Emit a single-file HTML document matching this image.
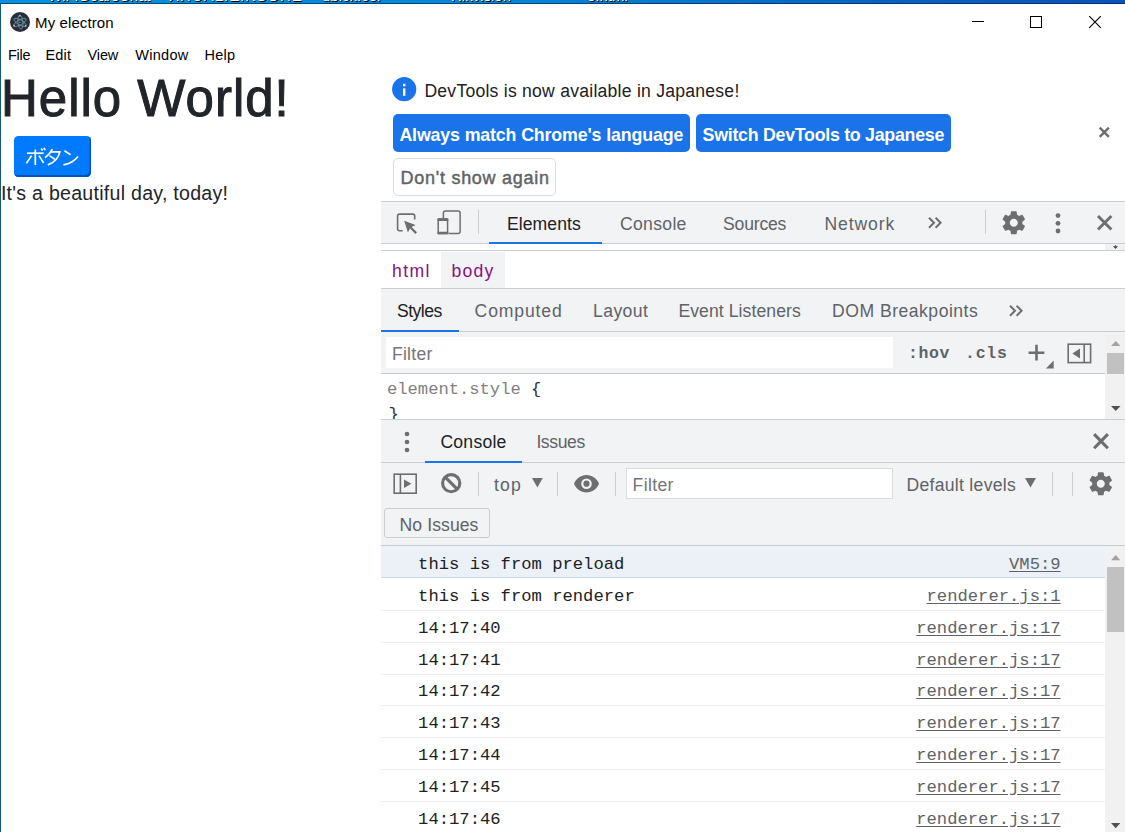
<!DOCTYPE html>
<html><head><meta charset="utf-8"><title>My electron</title>
<style>
html,body{margin:0;padding:0}
html{width:1125px;height:832px;overflow:hidden}
body{width:1125px;height:832px;position:relative;overflow:hidden;background:#fff;font-family:"Liberation Sans",sans-serif}
.a{position:absolute}
.t{position:absolute;white-space:nowrap;line-height:1}
.s{font-family:"Liberation Sans",sans-serif}
.m{font-family:"Liberation Mono",monospace}
.hl{position:absolute;height:1px;background:#cacdd1}
.bar{position:absolute;background:#f1f3f4}
.sep{position:absolute;width:1px;background:#cacdd1}
.row{position:absolute;left:381px;width:724px;height:32px;box-sizing:border-box;border-bottom:1px solid #f0f0f0}
.msg{position:absolute;left:418.1px;top:0;font-family:"Liberation Mono",monospace;font-size:17.19px;line-height:32px;color:#202124;white-space:nowrap}
.lnk{position:absolute;right:64.4px;top:0;font-family:"Liberation Mono",monospace;font-size:17.19px;line-height:32px;color:#5f6368;white-space:nowrap;text-decoration:underline;text-underline-offset:2px}
svg{position:absolute;overflow:visible}
</style></head><body>

<!-- desktop strip + window border -->
<div class="a" style="left:0;top:0;width:1125px;height:4px;background:linear-gradient(to right,#0091e0 0%,#0088d8 45%,#0560c0 80%,#0552b8 100%);overflow:hidden">
  <div class="t s" style="left:48px;top:-12.5px;font-size:15px;color:#fff;text-shadow:1px 1px 0 #000">WiFiGearsChat</div>
  <div class="t s" style="left:169px;top:-12.5px;font-size:15px;color:#fff;text-shadow:1px 1px 0 #000;letter-spacing:1px">XHUALIEIKSOHE</div>
  <div class="t s" style="left:322px;top:-12.5px;font-size:15px;color:#fff;text-shadow:1px 1px 0 #000">ublck.cer</div>
  <div class="t s" style="left:451px;top:-12.5px;font-size:15px;color:#fff;text-shadow:1px 1px 0 #000">Hikvision</div>
  <div class="t s" style="left:587px;top:-12.5px;font-size:15px;color:#fff;text-shadow:1px 1px 0 #000">3.html</div>
</div>
<div class="a" style="left:0;top:3px;width:1125px;height:1px;background:linear-gradient(to right,#0a4a6e,#0a2f6b)"></div>
<div class="a" style="left:0;top:3px;width:1px;height:829px;background:#14587c"></div>

<!-- title bar -->
<svg style="left:10px;top:12px" width="20" height="20" viewBox="0 0 20 20">
  <circle cx="10" cy="10" r="10" fill="#2b2e3a"/>
  <g fill="none" stroke="#9feaf9" stroke-width="0.75" opacity="0.62">
    <ellipse cx="10" cy="10.4" rx="6.9" ry="2.5" transform="rotate(-30 10 10.4)"/>
    <ellipse cx="10" cy="10.4" rx="6.9" ry="2.500" transform="rotate(30 10 10.400)"/>
    <ellipse cx="10.400" cy="10.200" rx="2.500" ry="6.900" transform="rotate(-6 10.400 10.200)"/>
  </g>
  <g fill="#9feaf9" opacity="0.7"><circle cx="9.800" cy="3.800" r="0.950"/><circle cx="4" cy="13.800" r="0.950"/><circle cx="15.700" cy="13.900" r="0.950"/><rect x="9" y="9.900" width="1.500" height="0.800"/></g>
</svg>
<!-- window controls -->
<div class="a" style="left:972px;top:21px;width:12px;height:1px;background:#000"></div>
<div class="a" style="left:1030px;top:16px;width:12px;height:12px;box-sizing:border-box;border:1px solid #000"></div>
<svg style="left:1089px;top:16px" width="12" height="12" viewBox="0 0 12 12"><path d="M0.2 0.2L11.8 11.8M11.8 0.2L0.2 11.8" stroke="#000" stroke-width="1.1" fill="none"/></svg>

<!-- page button -->
<div class="a" style="left:14px;top:136px;width:77px;height:41px;box-sizing:border-box;background:#007bff;border-radius:4.5px;box-shadow:inset -1.5px -2px 0 #0054b4"></div>
<svg style="left:24px;top:146px" width="58" height="22" viewBox="24 146 58 22" fill="none" stroke="#fff" stroke-width="1.7" stroke-linecap="butt">
  <!-- ボ -->
  <path d="M27 153.2H43.6"/><path d="M35.3 149.6V165"/><path d="M31.6 155.6L26.4 163.4"/><path d="M39 155.6L43.6 163"/>
  <path d="M41.2 148.6L42.6 150.6M43.8 148L45.2 150"/>
  <!-- タ -->
  <path d="M52.4 149.2Q50 154 45 157.8"/><path d="M50.4 151.8H59.8Q58 161 47.8 164.9"/><path d="M49.4 155.6L55 159.4"/>
  <!-- ン -->
  <path d="M64.4 150.8L70.6 154.8"/><path d="M78 156.4Q73 163 63.4 164.8"/>
</svg>

<!-- ============ DEVTOOLS ============ -->
<!-- infobar -->
<svg style="left:391.8px;top:77.2px" width="24.4" height="24.4" viewBox="0 0 24.4 24.4"><circle cx="12.2" cy="12.2" r="12.1" fill="#1a73e8"/><rect x="11" y="11.4" width="2.4" height="7.4" fill="#fff"/><rect x="11" y="6.800" width="2.400" height="2.500" fill="#fff"/></svg>
<div class="a" style="left:393px;top:114px;width:297px;height:38px;background:#1a73e8;border-radius:5px"></div>
<div class="a" style="left:696px;top:114px;width:255px;height:38px;background:#1a73e8;border-radius:5px"></div>
<div class="a" style="left:393px;top:158px;width:163px;height:38px;box-sizing:border-box;border:1px solid #dadce0;border-radius:5px;background:#fff"></div>
<svg style="left:1098.6px;top:127px" width="10.6" height="10.6" viewBox="0 0 10.6 10.6"><path d="M0.7 0.7L9.9 9.9M9.9 0.7L0.7 9.9" stroke="#6e6e6e" stroke-width="2.400" fill="none"/></svg>

<!-- main toolbar -->
<div class="bar" style="left:381px;top:201px;width:744px;height:43px"></div>
<div class="hl" style="left:381px;top:201px;width:744px"></div>
<div class="hl" style="left:381px;top:243px;width:744px"></div>
<div class="a" style="left:489px;top:241.5px;width:113px;height:2px;background:#1a73e8"></div>
<!-- inspect icon -->
<svg style="left:396px;top:213px" width="22" height="21" viewBox="0 0 22 21" fill="none" stroke="#6e6e6e" stroke-width="1.6">
  <path d="M6.7 17.8H3.6Q1.6 17.8 1.6 15.8V3.1Q1.6 1.1 3.6 1.1H16.7Q18.7 1.1 18.7 3.1V6.4"/>
  <path d="M8.2 7.8L19.6 11.9L15.6 13.9L21 19.3L19.4 20.9L14 15.500L11.900 19.500Z" fill="#6e6e6e" stroke="none"/>
</svg>
<!-- device icon -->
<svg style="left:437px;top:210px" width="25" height="25" viewBox="0 0 25 25" fill="none" stroke="#6e6e6e" stroke-width="1.5">
  <path d="M6.4 8.4V3Q6.4 1 8.4 1H21.1Q23.1 1 23.1 3V21.6Q23.100 23.600 21.100 23.600H11.600"/>
  <rect x="1.2" y="9" width="9.4" height="14.6" rx="0.8"/>
  <path d="M0.5 9.6H11.300M0.500 23H11.300" stroke-width="2.600"/>
</svg>
<div class="sep" style="left:478px;top:210px;height:24px"></div>
<!-- » -->
<svg style="left:928px;top:217px" width="14" height="12" viewBox="0 0 14 12" fill="none" stroke="#6e6e6e" stroke-width="2"><path d="M1 0.800L6 5.800L1 10.800M7.600 0.800L12.600 5.800L7.600 10.800"/></svg>
<div class="sep" style="left:985px;top:210px;height:24px"></div>
<!-- gear -->
<svg style="left:1000.2px;top:208.5px" width="27.6" height="27.6" viewBox="0 0 24 24"><path fill="#6e6e6e" d="M19.43 12.98c.04-.32.07-.64.07-.98s-.03-.66-.07-.98l2.11-1.65c.19-.15.24-.42.12-.64l-2-3.46c-.12-.22-.39-.3-.61-.22l-2.49 1c-.52-.4-1.08-.73-1.69-.98l-.38-2.65C14.46 2.18 14.25 2 14 2h-4c-.25 0-.46.18-.49.42l-.38 2.65c-.61.25-1.17.59-1.69.98l-2.49-1c-.23-.09-.49 0-.61.22l-2 3.46c-.13.22-.07.49.12.64l2.11 1.65c-.04.32-.07.65-.07.98s.03.66.07.98l-2.11 1.65c-.19.15-.24.42-.12.64l2 3.46c.12.22.39.3.61.22l2.49-1c.52.4 1.08.73 1.69.98l.38 2.65c.03.24.24.42.49.42h4c.25 0 .46-.18.49-.42l.38-2.65c.61-.25 1.17-.59 1.69-.98l2.49 1c.23.09.49 0 .61-.22l2-3.46c.12-.22.07-.49-.12-.64l-2.11-1.65zM12 15.5c-1.93 0-3.500-1.570-3.500-3.500s1.570-3.500 3.500-3.500 3.500 1.570 3.500 3.500-1.570 3.500-3.500 3.500z"/></svg>
<!-- kebab -->
<svg style="left:1054px;top:212px" width="8" height="22" viewBox="0 0 8 22" fill="#6e6e6e"><circle cx="4" cy="3.6" r="2.4"/><circle cx="4" cy="11.3" r="2.4"/><circle cx="4" cy="19" r="2.4"/></svg>
<!-- X -->
<svg style="left:1096.8px;top:214.6px" width="15.4" height="15.6" viewBox="0 0 15.4 15.6"><path d="M1 1L14.4 14.6M14.4 1L1 14.6" stroke="#6e6e6e" stroke-width="2.9" fill="none"/></svg>

<!-- small scrollbar stub under toolbar -->
<div class="a" style="left:1105px;top:244px;width:20px;height:6px;background:#f1f1f1"></div>
<svg style="left:1112.5px;top:245px" width="5" height="4" viewBox="0 0 5 4"><path d="M2.5 0V2M0.6 1.6L2.5 3.6L4.4 1.6Z" stroke="#505050" stroke-width="0.8" fill="#505050"/></svg>
<div class="hl" style="left:381px;top:250px;width:744px"></div>

<!-- breadcrumbs -->
<div class="a" style="left:441px;top:252px;width:64px;height:36px;background:#f1f3f4"></div>
<div class="hl" style="left:381px;top:288px;width:744px"></div>

<!-- styles tab bar -->
<div class="bar" style="left:381px;top:289px;width:744px;height:42px"></div>
<div class="hl" style="left:381px;top:331px;width:744px"></div>
<div class="a" style="left:381px;top:329.5px;width:78px;height:2px;background:#1a73e8"></div>
<svg style="left:1009px;top:305px" width="14" height="12" viewBox="0 0 14 12" fill="none" stroke="#6e6e6e" stroke-width="2"><path d="M1 0.800L6 5.800L1 10.800M7.600 0.800L12.600 5.800L7.600 10.800"/></svg>

<!-- filter row -->
<div class="bar" style="left:381px;top:332px;width:724px;height:41px"></div>
<div class="a" style="left:386px;top:337px;width:507px;height:31px;background:#fff"></div>
<div class="hl" style="left:381px;top:373px;width:724px"></div>
<!-- plus -->
<svg style="left:1028px;top:344px" width="27" height="25" viewBox="0 0 27 25"><path d="M8.500 0.800V16.600M0.600 8.700H16.400" stroke="#6e6e6e" stroke-width="2.600" fill="none"/><path d="M25.700 16.600V24.400H17.900Z" fill="#6e6e6e"/></svg>
<!-- toggle sidebar -->
<svg style="left:1067px;top:343px" width="25" height="21" viewBox="0 0 25 21" fill="none" stroke="#6e6e6e" stroke-width="1.6"><rect x="1.2" y="1.2" width="22.4" height="18.4"/><path d="M17.2 1.2V19.6"/><path d="M13 5.400L5.400 10.400L13 15.400Z" fill="#6e6e6e" stroke="none"/></svg>

<!-- styles scrollbar -->
<div class="a" style="left:1105px;top:332px;width:20px;height:87px;background:#f1f1f1"></div>
<svg style="left:1110.5px;top:340.8px" width="9.5" height="5" viewBox="0 0 9.5 5"><path d="M4.75 0L9.5 5H0Z" fill="#a3a3a3"/></svg>
<div class="a" style="left:1107px;top:353px;width:17px;height:20.6px;background:#c1c1c1"></div>
<svg style="left:1110.5px;top:406px" width="9.5" height="5" viewBox="0 0 9.5 5"><path d="M0 0H9.5L4.75 5Z" fill="#505050"/></svg>

<!-- element.style -->
<div class="t m" style="left:387px;top:381.4px;font-size:17.15px;color:#808080">element.style <span style="color:#303134">{</span></div>
<div class="a" style="left:381px;top:400px;width:724px;height:19px;overflow:hidden"><div class="t m" style="left:7.5px;top:6.4px;font-size:17.15px;color:#303134">}</div></div>

<!-- drawer -->
<div class="bar" style="left:381px;top:419px;width:744px;height:127px"></div>
<div class="hl" style="left:381px;top:419px;width:744px"></div>
<div class="hl" style="left:381px;top:462px;width:744px"></div>
<div class="a" style="left:425px;top:460.5px;width:97px;height:2px;background:#1a73e8"></div>
<svg style="left:402.6px;top:431px" width="8" height="22" viewBox="0 0 8 22" fill="#6e6e6e"><circle cx="4" cy="3" r="2.3"/><circle cx="4" cy="11" r="2.3"/><circle cx="4" cy="19" r="2.3"/></svg>
<svg style="left:1093px;top:432.8px" width="16" height="16.4" viewBox="0 0 16 16.4"><path d="M1.1 1.1L14.9 15.3M14.9 1.1L1.1 15.3" stroke="#6e6e6e" stroke-width="3.1" fill="none"/></svg>

<!-- console toolbar icons -->
<svg style="left:393px;top:473px" width="24" height="21" viewBox="0 0 24 21" fill="none" stroke="#6e6e6e" stroke-width="1.6"><rect x="1.2" y="1.2" width="22" height="19"/><path d="M7.4 1.2V20.2"/><path d="M11 6.4L18.4 10.7L11 15Z" fill="#6e6e6e" stroke="none"/></svg>
<svg style="left:440.6px;top:473.4px" width="20.4" height="20.4" viewBox="0 0 20.4 20.4" fill="none" stroke="#6e6e6e" stroke-width="3.1"><circle cx="10.2" cy="10.2" r="8.600"/><path d="M4.2 4.2L16.2 16.2"/></svg>
<div class="sep" style="left:478px;top:471.6px;height:24px"></div>
<svg style="left:531.6px;top:478.2px" width="10.8" height="9.6" viewBox="0 0 10.8 9.6"><path d="M0 0H10.800L5.400 9.600Z" fill="#6e6e6e"/></svg>
<div class="sep" style="left:557px;top:471.6px;height:24px"></div>
<svg style="left:573.6px;top:474.6px" width="25" height="17.4" viewBox="0 0 25 17.4"><path d="M12.5 0C6.8 0 2 3.6 0 8.7c2 5.100 6.800 8.700 12.500 8.700s10.500-3.600 12.500-8.700C23 3.600 18.200 0 12.500 0z" fill="#6e6e6e"/><circle cx="12.500" cy="8.700" r="5.300" fill="#f1f3f4"/><circle cx="12.500" cy="8.700" r="3.100" fill="#6e6e6e"/></svg>
<div class="sep" style="left:615px;top:471.6px;height:24px"></div>
<div class="a" style="left:626px;top:467.6px;width:267px;height:31px;box-sizing:border-box;border:1px solid #dcdcdc;background:#fff"></div>
<svg style="left:1025px;top:478.4px" width="11" height="9.6" viewBox="0 0 11 9.600"><path d="M0 0H11L5.5 9.6Z" fill="#6e6e6e"/></svg>
<div class="sep" style="left:1052px;top:471.6px;height:24px"></div>
<div class="sep" style="left:1072px;top:471.6px;height:24px"></div>
<svg style="left:1087.2px;top:469.6px" width="27.6" height="27.6" viewBox="0 0 24 24"><path fill="#6e6e6e" d="M19.43 12.98c.04-.32.07-.64.07-.98s-.03-.66-.07-.98l2.11-1.65c.19-.15.24-.42.12-.64l-2-3.46c-.12-.22-.39-.3-.61-.22l-2.49 1c-.52-.4-1.08-.73-1.69-.98l-.38-2.65C14.46 2.18 14.25 2 14 2h-4c-.25 0-.46.18-.49.42l-.38 2.65c-.61.25-1.17.59-1.69.98l-2.49-1c-.23-.09-.49 0-.61.22l-2 3.46c-.13.22-.07.49.12.64l2.11 1.65c-.04.32-.07.65-.07.98s.03.66.07.98l-2.11 1.65c-.19.15-.24.42-.12.64l2 3.46c.12.22.39.3.61.22l2.490-1c.52.4 1.080.73 1.690.98l.38 2.650c.03.240.24.420.49.420h4c.25 0 .46-.18.49-.42l.38-2.650c.61-.25 1.170-.59 1.690-.98l2.490 1c.23.090.49 0 .61-.22l2-3.460c.12-.22.070-.49-.12-.64l-2.110-1.650zM12 15.500c-1.930 0-3.500-1.570-3.500-3.500s1.570-3.500 3.500-3.500 3.500 1.570 3.500 3.500-1.570 3.500-3.500 3.500z"/></svg>

<!-- No Issues -->
<div class="a" style="left:384.4px;top:508.4px;width:105.2px;height:30px;box-sizing:border-box;border:1px solid #cacdd1;border-radius:3px"></div>

<!-- console messages -->
<div class="a" style="left:381px;top:546px;width:744px;height:286px;background:#fff"></div>
<div class="hl" style="left:381px;top:545px;width:744px;background:#c4cad6"></div>
<div class="row" style="top:546px;height:32px;background:#ecf1f8;border-bottom:1px solid #c6d9f5"></div>
<div class="row" style="top:578px;height:33px"></div>
<div class="row" style="top:611px;height:32px"></div>
<div class="row" style="top:643px;height:32px"></div>
<div class="row" style="top:675px;height:31px"></div>
<div class="row" style="top:706px;height:32px"></div>
<div class="row" style="top:738px;height:32px"></div>
<div class="row" style="top:770px;height:32px"></div>
<div class="row" style="top:802px;height:30px;border-bottom:none"></div>
<div class="a" style="left:0;top:549px;width:1125px;height:283px;overflow:hidden">
<div class="msg" style="top:0.00px">this is from preload</div><div class="lnk" style="top:0.00px">VM5:9</div>
<div class="msg" style="top:31.85px">this is from renderer</div><div class="lnk" style="top:31.85px">renderer.js:1</div>
<div class="msg" style="top:63.70px">14:17:40</div><div class="lnk" style="top:63.70px">renderer.js:17</div>
<div class="msg" style="top:95.55px">14:17:41</div><div class="lnk" style="top:95.55px">renderer.js:17</div>
<div class="msg" style="top:127.40px">14:17:42</div><div class="lnk" style="top:127.40px">renderer.js:17</div>
<div class="msg" style="top:159.25px">14:17:43</div><div class="lnk" style="top:159.25px">renderer.js:17</div>
<div class="msg" style="top:191.10px">14:17:44</div><div class="lnk" style="top:191.10px">renderer.js:17</div>
<div class="msg" style="top:222.95px">14:17:45</div><div class="lnk" style="top:222.95px">renderer.js:17</div>
<div class="msg" style="top:254.80px">14:17:46</div><div class="lnk" style="top:254.80px">renderer.js:17</div>
</div>
<!-- console scrollbar -->
<div class="a" style="left:1105px;top:546px;width:20px;height:286px;background:#f1f1f1"></div>
<svg style="left:1110.8px;top:554.8px" width="9.4" height="5.2" viewBox="0 0 9.400 5.200"><path d="M4.7 0L9.4 5.2H0Z" fill="#a3a3a3"/></svg>
<div class="a" style="left:1107px;top:567px;width:17px;height:65px;background:#c1c1c1"></div>
<svg style="left:1110.8px;top:823.3px" width="9.4" height="5.2" viewBox="0 0 9.400 5.200"><path d="M0 0H9.4L4.7 5.2Z" fill="#505050"/></svg>

<div class="t s" style="left:35.10px;top:14.80px;font-size:15px;letter-spacing:0.092px;color:#000;">My electron</div>
<div class="t s" style="left:8.00px;top:48.35px;font-size:14.5px;letter-spacing:-0.300px;color:#000;">File</div>
<div class="t s" style="left:45.40px;top:48.35px;font-size:14.5px;letter-spacing:0.214px;color:#000;">Edit</div>
<div class="t s" style="left:87.60px;top:48.35px;font-size:14.5px;letter-spacing:-0.165px;color:#000;">View</div>
<div class="t s" style="left:135.20px;top:48.35px;font-size:14.5px;letter-spacing:0.300px;color:#000;">Window</div>
<div class="t s" style="left:204.40px;top:48.35px;font-size:14.5px;letter-spacing:0.281px;color:#000;">Help</div>
<div class="t s" style="left:1.00px;top:72.90px;font-size:51px;letter-spacing:0.996px;color:#212529;-webkit-text-stroke:1px #212529;">Hello World!</div>
<div class="t s" style="left:0.90px;top:183.90px;font-size:19.6px;letter-spacing:0.256px;color:#212529;">It's a beautiful day, today!</div>
<div class="t s" style="left:424.40px;top:83.20px;font-size:17.6px;letter-spacing:0.237px;color:#202124;">DevTools is now available in Japanese!</div>
<div class="t s" style="left:399.40px;top:126.50px;font-size:17.8px;letter-spacing:-0.136px;color:#fff;font-weight:700;">Always match Chrome's language</div>
<div class="t s" style="left:702.60px;top:126.50px;font-size:17.8px;letter-spacing:-0.269px;color:#fff;font-weight:700;">Switch DevTools to Japanese</div>
<div class="t s" style="left:400.60px;top:169.20px;font-size:18px;letter-spacing:0.726px;color:#5f6368;-webkit-text-stroke:0.45px #5f6368;">Don't show again</div>
<div class="t s" style="left:507.00px;top:216.20px;font-size:17.6px;letter-spacing:0.065px;color:#202124;">Elements</div>
<div class="t s" style="left:620.00px;top:216.20px;font-size:17.6px;letter-spacing:0.306px;color:#5f6368;">Console</div>
<div class="t s" style="left:723.00px;top:216.20px;font-size:17.6px;letter-spacing:-0.191px;color:#5f6368;">Sources</div>
<div class="t s" style="left:824.40px;top:216.20px;font-size:17.6px;letter-spacing:0.879px;color:#5f6368;">Network</div>
<div class="t s" style="left:392.00px;top:262.60px;font-size:17.6px;letter-spacing:1.424px;color:#881280;">html</div>
<div class="t s" style="left:451.40px;top:262.60px;font-size:17.6px;letter-spacing:1.282px;color:#881280;">body</div>
<div class="t s" style="left:397.00px;top:303.20px;font-size:17.6px;letter-spacing:-0.543px;color:#202124;">Styles</div>
<div class="t s" style="left:474.60px;top:303.20px;font-size:17.6px;letter-spacing:0.859px;color:#5f6368;">Computed</div>
<div class="t s" style="left:593.00px;top:303.20px;font-size:17.6px;letter-spacing:0.413px;color:#5f6368;">Layout</div>
<div class="t s" style="left:678.40px;top:303.20px;font-size:17.6px;letter-spacing:0.081px;color:#5f6368;">Event Listeners</div>
<div class="t s" style="left:832.00px;top:303.20px;font-size:17.6px;letter-spacing:0.497px;color:#5f6368;">DOM Breakpoints</div>
<div class="t s" style="left:392.00px;top:346.20px;font-size:17.6px;letter-spacing:0.233px;color:#757575;">Filter</div>
<div class="t m" style="left:908.00px;top:345.85px;font-size:16.5px;letter-spacing:0.632px;color:#5f6368;font-weight:700;">:hov</div>
<div class="t m" style="left:965.00px;top:345.85px;font-size:16.5px;letter-spacing:0.765px;color:#5f6368;font-weight:700;">.cls</div>
<div class="t s" style="left:440.40px;top:433.80px;font-size:17.6px;letter-spacing:0.239px;color:#202124;">Console</div>
<div class="t s" style="left:536.40px;top:433.80px;font-size:17.6px;letter-spacing:-0.410px;color:#5f6368;">Issues</div>
<div class="t s" style="left:494.00px;top:476.60px;font-size:17.6px;letter-spacing:1.164px;color:#5f6368;">top</div>
<div class="t s" style="left:632.60px;top:477.20px;font-size:17.6px;letter-spacing:0.353px;color:#757575;">Filter</div>
<div class="t s" style="left:906.40px;top:476.60px;font-size:17.6px;letter-spacing:0.291px;color:#5f6368;">Default levels</div>
<div class="t s" style="left:399.60px;top:516.60px;font-size:17.6px;letter-spacing:0.071px;color:#5f6368;">No Issues</div>
</body></html>
